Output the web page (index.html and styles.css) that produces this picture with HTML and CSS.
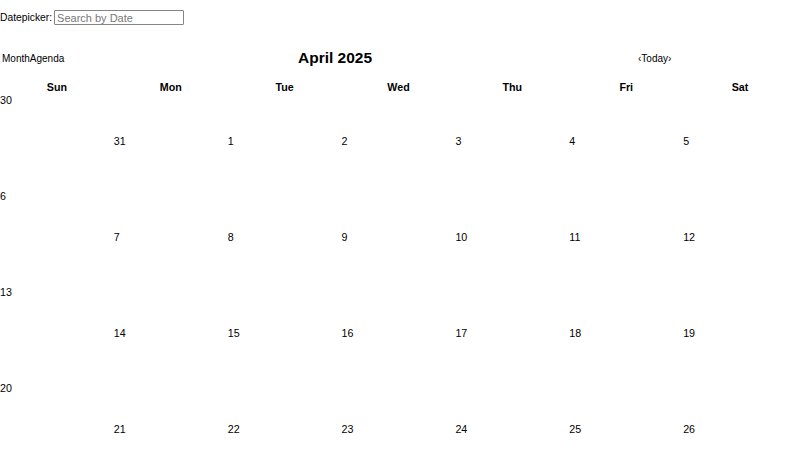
FILE: index.html
```html
<!DOCTYPE html>
<html lang="en">
<head>
<meta charset="utf-8">
<title>Calendar</title>
<link rel="stylesheet" href="styles.css">
</head>
<body>
<div class="picker">
  <label class="picker-label" for="date">Datepicker:</label>
  <input id="date" class="picker-input" type="text" placeholder="Search by Date">
</div>
<div class="toolbar">
  <div class="views"><span class="btn">Month</span><span class="btn">Agenda</span></div>
  <h2 class="title">April 2025</h2>
  <div class="nav"><span class="btn">‹</span><span class="btn">Today</span><span class="btn">›</span></div>
</div>
<div class="head">
  <div>Sun</div><div>Mon</div><div>Tue</div><div>Wed</div><div>Thu</div><div>Fri</div><div>Sat</div>
</div>
<div class="week">
  <div class="first">30</div>
  <div class="days"><span></span><span>31</span><span>1</span><span>2</span><span>3</span><span>4</span><span>5</span></div>
</div>
<div class="week">
  <div class="first">6</div>
  <div class="days"><span></span><span>7</span><span>8</span><span>9</span><span>10</span><span>11</span><span>12</span></div>
</div>
<div class="week">
  <div class="first">13</div>
  <div class="days"><span></span><span>14</span><span>15</span><span>16</span><span>17</span><span>18</span><span>19</span></div>
</div>
<div class="week">
  <div class="first">20</div>
  <div class="days"><span></span><span>21</span><span>22</span><span>23</span><span>24</span><span>25</span><span>26</span></div>
</div>
</body>
</html>
```
FILE: styles.css
```css
html, body {
  margin: 0;
  padding: 0;
  background: #fff;
  color: #000;
  font-family: "Liberation Sans", Arial, sans-serif;
}
body {
  overflow: hidden;
  height: 450px;
}
.picker {
  display: flex;
  align-items: center;
  padding-top: 10px;
  height: 15px;
}
.picker-label {
  font-size: 10.3px;
  margin-right: 2px;
}
.picker-input {
  box-sizing: border-box;
  width: 130px;
  height: 15px;
  margin: 0;
  padding: 0 2px;
  border: 1px solid #858585;
  border-radius: 1px;
  font-family: "Liberation Sans", Arial, sans-serif;
  font-size: 11px;
  color: #000;
}
.picker-input::placeholder {
  color: #777;
}
.toolbar {
  display: grid;
  grid-template-columns: 298px 340px auto;
  align-items: center;
  margin-top: 23px;
  height: 20px;
}
.views {
  padding-left: 2px;
  font-size: 10px;
}
.nav {
  font-size: 10px;
}
.title {
  margin: 0;
  font-size: 15.5px;
  font-weight: bold;
}
.head {
  display: grid;
  grid-template-columns: repeat(7, 1fr);
  width: 797px;
  margin-top: 12px;
  height: 14px;
  line-height: 14px;
  font-size: 10.7px;
  font-weight: bold;
  text-align: center;
}
.week {
  height: 96px;
  font-size: 10.7px;
}
.week:last-child {
  height: auto;
}
.first {
  height: 13px;
  line-height: 13px;
}
.days {
  display: grid;
  grid-template-columns: repeat(7, 1fr);
  width: 797px;
  margin-top: 28px;
  line-height: 13px;
}
```
